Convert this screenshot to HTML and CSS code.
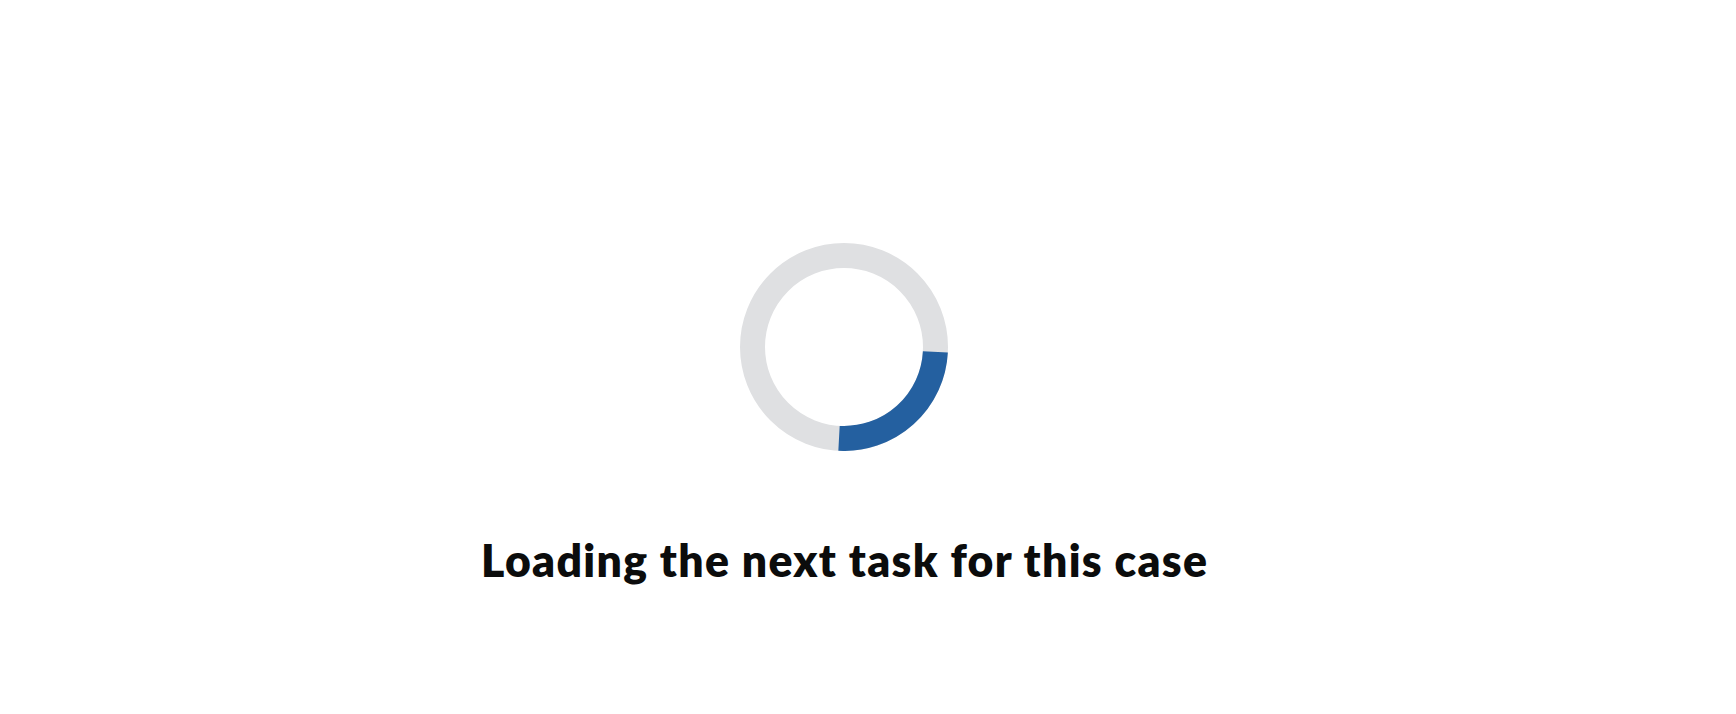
FILE: index.html
```html
<!DOCTYPE html>
<html lang="en">
<head>
<meta charset="utf-8">
<title>Loading</title>
<link rel="stylesheet" href="styles.css">
</head>
<body>
<main class="page">
  <div class="loader">
    <svg class="spinner" width="208" height="208" viewBox="0 0 208 208" aria-hidden="true">
      <circle class="track" cx="104" cy="104" r="91.5"/>
      <circle class="arc" cx="104" cy="104" r="91.5" transform="rotate(3 104 104)"/>
    </svg>
    <h1 class="title">Loading the next task for this case</h1>
  </div>
</main>
</body>
</html>
```
FILE: styles.css
```css
html, body {
  margin: 0;
  padding: 0;
  background: #ffffff;
}
.page {
  height: 714px;
  padding-right: 48px;
  box-sizing: border-box;
}
.loader {
  display: flex;
  flex-direction: column;
  align-items: center;
  padding-top: 243px;
}
.spinner {
  display: block;
}
.track {
  fill: none;
  stroke: #dfe0e2;
  stroke-width: 25;
}
.arc {
  fill: none;
  stroke: #2460a0;
  stroke-width: 25;
  stroke-dasharray: 143.7 600;
}
.title {
  margin: 82px 0 0;
  font-family: Lato, "Liberation Sans", sans-serif;
  font-weight: 800;
  font-size: 44.5px;
  line-height: 1.2;
  color: #0b0c0c;
  letter-spacing: 1.3px;
  text-indent: 1.3px;
}
```
